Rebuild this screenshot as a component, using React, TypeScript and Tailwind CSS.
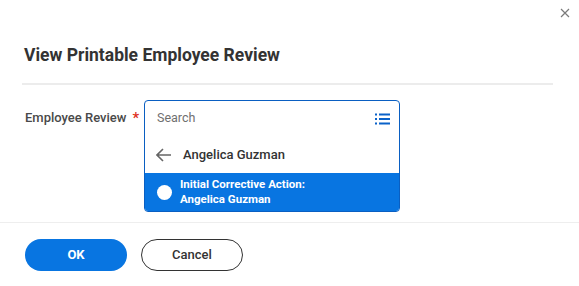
import React from 'react';

function ListIcon() {
  return (
    <svg width="15" height="12" viewBox="0 0 15 12" aria-hidden>
      <rect x="0" y="0.5" width="2" height="2" fill="#0a62c9" />
      <rect x="4" y="0.5" width="11" height="2" fill="#0a62c9" />
      <rect x="0" y="5" width="2" height="2" fill="#0a62c9" />
      <rect x="4" y="5" width="11" height="2" fill="#0a62c9" />
      <rect x="0" y="9.5" width="2" height="2" fill="#0a62c9" />
      <rect x="4" y="9.5" width="11" height="2" fill="#0a62c9" />
    </svg>
  );
}

function BackArrow() {
  return (
    <svg width="16" height="14" viewBox="0 0 16 14" aria-hidden>
      <path d="M7 1 L1 7 L7 13 M1 7 H15" fill="none" stroke="#666" strokeWidth="1.6" />
    </svg>
  );
}

export default function App() {
  return (
    <div
      className="relative h-[286px] w-[579px] overflow-hidden bg-white text-[#333]"
      style={{ fontFamily: 'Roboto, "Liberation Sans", sans-serif' }}
    >
      <button type="button" className="absolute right-[8px] top-[7px] p-[1px]" title="Close">
        <svg width="10" height="10" viewBox="0 0 10 10" aria-hidden>
          <path d="M1 1 L9 9 M9 1 L1 9" stroke="#7a7a7a" strokeWidth="1.2" />
        </svg>
      </button>

      <div className="pl-[22px] pr-[26px] pt-[43px]">
        <h1 className="border-b-2 border-[#ececec] pb-[16px] pl-[2px] text-[17.5px] font-bold leading-[24px] text-[#333]">
          View Printable Employee Review
        </h1>
      </div>

      <div className="mt-[15px] flex pl-[25px]">
        <div className="flex h-[36px] w-[119px] items-center whitespace-nowrap text-[13px] font-medium text-[#494949]">
          Employee Review
          <span className="ml-[6px] text-[15px] text-[#de2e21]">*</span>
        </div>
        <div className="w-[256px] overflow-hidden rounded-[4px] border border-[#0a5fc2]">
          <div className="flex h-[35px] items-center justify-between pl-[12px] pr-[9px]">
            <span className="text-[12.5px] text-[#6f6f6f]">Search</span>
            <ListIcon />
          </div>
          <div className="flex h-[37px] items-center pl-[11px]">
            <BackArrow />
            <span className="ml-[11px] text-[13px] font-medium text-[#333]">Angelica Guzman</span>
          </div>
          <div className="flex h-[38px] items-center bg-[#0875e1] pl-[12px]">
            <span className="h-[15px] w-[15px] shrink-0 rounded-full bg-white" />
            <div className="ml-[8px] text-[11.5px] font-bold leading-[15px] text-white">
              <div>Initial Corrective Action:</div>
              <div>Angelica Guzman</div>
            </div>
          </div>
        </div>
      </div>

      <div className="mt-[10px] flex gap-[14px] border-t border-[#eeeeee] pl-[25px] pt-[16px]">
        <button
          type="button"
          className="h-[32px] w-[102px] rounded-full bg-[#0875e1] text-[13px] font-bold text-white"
        >
          OK
        </button>
        <button
          type="button"
          className="h-[32px] w-[102px] rounded-full border border-[#333] bg-white text-[13px] font-medium text-[#333]"
        >
          Cancel
        </button>
      </div>
    </div>
  );
}
